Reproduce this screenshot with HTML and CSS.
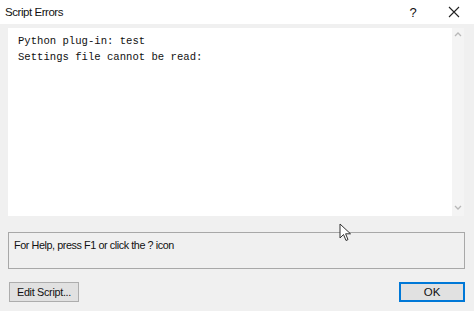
FILE: index.html
```html
<!DOCTYPE html>
<html>
<head>
<meta charset="utf-8">
<link rel="stylesheet" href="styles.css">
</head>
<body>
<div class="window">
  <div class="titlebar">
    <span class="title">Script Errors</span>
    <span class="help">?</span>
    <span class="close">
      <svg width="12" height="12" viewBox="0 0 12 12"><path d="M1 1 L11 11 M11 1 L1 11" stroke="#222" stroke-width="1.1" fill="none"/></svg>
    </span>
  </div>
  <div class="content">
    <div class="output">
      <div class="text">Python plug-in: test
Settings file cannot be read:</div>
      <div class="scrollbar">
        <svg width="12" height="10" viewBox="0 0 12 10"><path d="M3 6 L6 3 L9 6" stroke="#b8b8b8" stroke-width="1.3" fill="none"/></svg>
        <svg width="12" height="10" viewBox="0 0 12 10"><path d="M3 4 L6 7 L9 4" stroke="#b8b8b8" stroke-width="1.3" fill="none"/></svg>
      </div>
    </div>
    <div class="status">For Help, press F1 or click the ? icon</div>
    <div class="buttons">
      <button class="btn">Edit Script...</button>
      <button class="btn ok">OK</button>
    </div>
  </div>
  <svg class="cursor" width="14" height="20" viewBox="0 0 14 20">
    <path d="M1 1 L1 15 L4.5 11.5 L7 17.5 L9 16.6 L6.6 10.8 L11.5 10.8 Z" fill="#fff" stroke="#333" stroke-width="1" stroke-linejoin="round"/>
  </svg>
</div>
</body>
</html>
```

FILE: styles.css
```css
html, body {
  margin: 0;
  padding: 0;
}
body {
  width: 474px;
  height: 311px;
  background: #f0f0f0;
  font-family: "Liberation Sans", Arial, sans-serif;
  overflow: hidden;
}
.window {
  position: relative;
  width: 474px;
  height: 311px;
}
.titlebar {
  height: 24px;
  background: #ffffff;
  display: flex;
  align-items: center;
  font-size: 11.5px;
  color: #111;
}
.title {
  padding-left: 5px;
  flex: 1;
  letter-spacing: -0.45px;
}
.help {
  width: 14px;
  margin-right: 28px;
  font-size: 13px;
  text-align: center;
}
.close {
  width: 12px;
  height: 12px;
  margin-right: 14px;
  display: flex;
}
.content {
  padding: 4px 10px 0 8px;
}
.output {
  display: flex;
  height: 188px;
}
.text {
  flex: 1;
  background: #ffffff;
  padding: 5px 10px;
  font-family: "Liberation Mono", monospace;
  font-size: 10.6px;
  line-height: 16px;
  white-space: pre;
  color: #111;
}
.scrollbar {
  width: 12px;
  background: #f4f4f4;
  display: flex;
  flex-direction: column;
  justify-content: space-between;
  padding: 2px 0 4px;
}
.status {
  margin-top: 16px;
  height: 37px;
  border: 1px solid #a8a8a8;
  font-size: 10.8px;
  letter-spacing: -0.42px;
  color: #111;
  padding: 6px 5px 0;
  box-sizing: border-box;
  margin-right: -1px;
}
.buttons {
  margin-top: 13px;
  display: flex;
  justify-content: space-between;
  margin-right: -1px;
}
.btn {
  height: 20px;
  padding: 0 7px;
  font-family: "Liberation Sans", Arial, sans-serif;
  font-size: 10.8px;
  letter-spacing: -0.3px;
  color: #111;
  background: #e1e1e1;
  border: 1px solid #adadad;
  margin-left: 1px;
}
.ok {
  width: 66px;
  border: 2px solid #0078d7;
  font-size: 11.5px;
  letter-spacing: 0;
}
.cursor {
  position: absolute;
  left: 339px;
  top: 223px;
}
```
